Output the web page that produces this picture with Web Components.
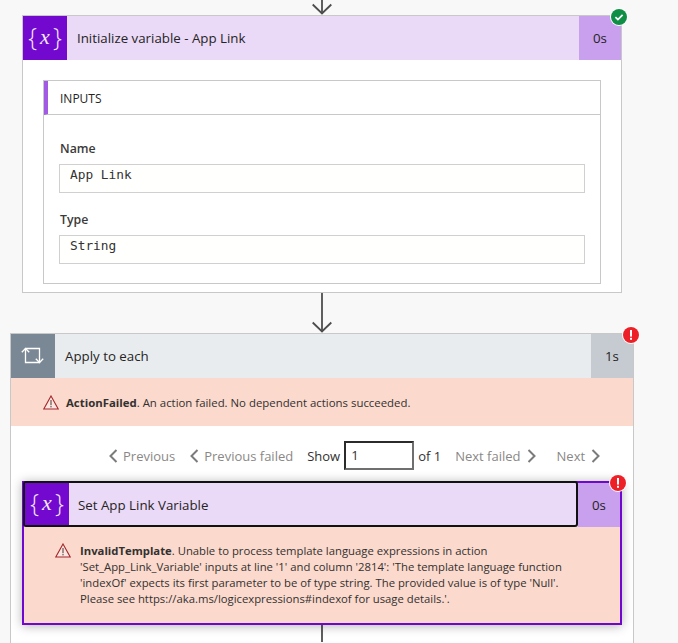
<!DOCTYPE html>
<html>
<head>
<meta charset="utf-8">
<title>Run details</title>
<style>
    html, body { margin: 0; height: 643px; overflow: hidden; background: #f8f8f8; }
    body { font-family: "Open Sans", "Noto Sans", sans-serif; color: #252423; }
</style>
</head>
<body>
<run-page>
    <flow-arrow height="15"></flow-arrow>
    <run-card status="ok" style="width: 600px">
        <run-header slot="head" icon="variable" label="Initialize variable - App Link" time="0s"></run-header>
        <inputs-panel>
            <field-box label="Name" value="App Link"></field-box>
            <field-box label="Type" value="String"></field-box>
        </inputs-panel>
    </run-card>
    <flow-arrow height="40"></flow-arrow>
    <run-card status="fail" style="width: 624px; height: 320px">
        <run-header slot="head" icon="loop" label="Apply to each" time="1s"></run-header>
        <error-banner size="outer"><b>ActionFailed</b>. An action failed. No dependent actions succeeded.</error-banner>
        <repeat-pager></repeat-pager>
        <failed-card>
            <run-header slot="head" icon="variable" label="Set App Link Variable" time="0s" focused></run-header>
            <error-banner size="inner"><b>InvalidTemplate</b>. Unable to process template language expressions in action<br>'Set_App_Link_Variable' inputs at line '1' and column '2814': 'The template language function<br>'indexOf' expects its first parameter to be of type string. The provided value is of type 'Null'.<br>Please see https://aka.ms/logicexpressions#indexof for usage details.'.</error-banner>
        </failed-card>
        <flow-arrow height="18" plain></flow-arrow>
    </run-card>
</run-page>

<script>
class RunPage extends HTMLElement {
    constructor() {
        super()
        this.shadow = this.attachShadow({ mode: 'open' });
    }
    connectedCallback() {
        this.shadow.innerHTML = `
        <style>
            :host { display: flex; flex-direction: column; align-items: center; width: 644px; }
        </style>
        <slot></slot>
        `;
    }
}

class FlowArrow extends HTMLElement {
    constructor() {
        super()
        this.shadow = this.attachShadow({ mode: 'open' });
    }
    connectedCallback() {
        const h = Number(this.getAttribute('height'));
        const head = this.hasAttribute('plain') ? '' : `<path d="M0.7 ${h - 10.5} L10 ${h - 1.5} L19.3 ${h - 10.5}" fill="none" stroke="#4d4d4d" stroke-width="1.8"/>`;
        this.shadow.innerHTML = `
        <style>
            :host { display: block; width: 20px; height: ${h}px; }
            svg { display: block; }
        </style>
        <svg width="20" height="${h}" viewBox="0 0 20 ${h}">
            <path d="M10 0 V${h - 1}" stroke="#4d4d4d" stroke-width="1.8"/>
            ${head}
        </svg>
        `;
    }
}

class RunCard extends HTMLElement {
    constructor() {
        super()
        this.shadow = this.attachShadow({ mode: 'open' });
    }
    connectedCallback() {
        const status = this.getAttribute('status');
        const badge = status == 'ok'
            ? `<svg class="badge" viewBox="0 0 18 18"><circle cx="9" cy="9" r="9" fill="#fff"/><circle cx="9" cy="9" r="8" fill="#0f8f46"/><path d="M5.4 9.2 L7.9 11.5 L12.6 6.8" fill="none" stroke="#fff" stroke-width="1.7"/></svg>`
            : `<svg class="badge" viewBox="0 0 18 18"><circle cx="9" cy="9" r="9" fill="#fff"/><circle cx="9" cy="9" r="8" fill="#ee2027"/><rect x="8" y="4" width="2" height="6.6" fill="#fff"/><rect x="8" y="11.8" width="2" height="2" fill="#fff"/></svg>`;
        this.shadow.innerHTML = `
        <style>
            :host { display: block; position: relative; box-sizing: border-box; border: 1px solid #c8c8c8; background: #fff; flex: none; }
            .badge { position: absolute; top: -8px; right: -7px; width: 18px; height: 18px; }
            :host([status="fail"]) { border-bottom: 0; }
            .stack { display: flex; flex-direction: column; align-items: center; }
            .stack ::slotted(*) { align-self: stretch; }
            .stack ::slotted(failed-card) { align-self: center; }
            .stack ::slotted(flow-arrow) { align-self: center; }
        </style>
        <slot name="head"></slot>
        <div class="stack"><slot></slot></div>
        ${badge}
        `;
    }
}

class RunHeader extends HTMLElement {
    constructor() {
        super()
        this.shadow = this.attachShadow({ mode: 'open' });
    }
    connectedCallback() {
        const icon = this.getAttribute('icon');
        const glyph = icon == 'variable'
            ? `<span class="brace">{</span><span class="ex">x</span><span class="brace">}</span>`
            : `<svg width="28" height="20" viewBox="0 0 28 20"><path d="M6.5 2.5 V16.5 H20.5 V2.5 H6.5" fill="none" stroke="#fff" stroke-width="1.3"/><path d="M2.8 6.3 L6.5 2.5 L10.2 6.3" fill="none" stroke="#fff" stroke-width="1.3"/><path d="M16.8 12.7 L20.5 16.5 L24.2 12.7" fill="none" stroke="#fff" stroke-width="1.3"/></svg>`;
        this.shadow.innerHTML = `
        <style>
            :host { display: flex; height: 44px; background: #e9ecef; font-size: 13.3px; color: #252423; position: relative; }
            :host([icon="variable"]) { background: #ead9f7; }
            .icon { width: 44px; height: 44px; flex: none; display: flex; align-items: center; justify-content: center; background: #7a8896; color: #fff; }
            :host([icon="variable"]) .icon { background: #7309cf; }
            .brace { font: 300 25px/44px "Open Sans", sans-serif; margin-top: -5px; opacity: 0.9; }
            .ex { font: italic 22px/44px "Liberation Serif", serif; margin: -3px 3px 0; opacity: 0.9; }
            .label { flex: 1; padding-left: 10px; line-height: 44px; white-space: nowrap; }
            .time { width: 42px; flex: none; text-align: center; line-height: 44px; background: #c5cbd1; }
            :host([icon="variable"]) .time { background: #c8a0ed; }
            .focus { display: contents; }
            :host([focused]) .focus { display: flex; flex: 1; box-sizing: border-box; border: 2px solid #111; border-radius: 3px; margin: -2px 0 0 -1px; height: 46px; }
            :host([focused]) .icon { height: 42px; width: 44px; }
            :host([focused]) .label { line-height: 44px; padding-left: 9px; }
        </style>
        <div class="focus">
            <div class="icon">${glyph}</div>
            <div class="label">${this.getAttribute('label')}</div>
        </div>
        <div class="time">${this.getAttribute('time')}</div>
        `;
    }
}

class InputsPanel extends HTMLElement {
    constructor() {
        super()
        this.shadow = this.attachShadow({ mode: 'open' });
    }
    connectedCallback() {
        this.shadow.innerHTML = `
        <style>
            :host { display: block; box-sizing: border-box; margin: 20px 20px 8px; border: 1px solid #c8c8c8; background: #fff; height: 204px; }
            .title { height: 34px; box-sizing: border-box; border-left: 4px solid #a259e4; border-bottom: 1px solid #c8c8c8; padding-left: 12px; line-height: 35px; font-size: 12px; }
            .fields { padding: 25px 15px 0; display: flex; flex-direction: column; gap: 18px; }
        </style>
        <div class="title">INPUTS</div>
        <div class="fields"><slot></slot></div>
        `;
    }
}

class FieldBox extends HTMLElement {
    constructor() {
        super()
        this.shadow = this.attachShadow({ mode: 'open' });
    }
    connectedCallback() {
        this.shadow.innerHTML = `
        <style>
            :host { display: block; font-size: 13px; }
            .name { line-height: 18px; font-weight: 600; color: #3b3a39; margin-bottom: 6px; font-size: 12.3px; padding-left: 1px; }
            .value { box-sizing: border-box; height: 29px; border: 1px solid #d0d0d0; background: #fffffd; padding: 1px 10px; font: 12.8px/18px "DejaVu Sans Mono", monospace; color: #333; white-space: pre; }
        </style>
        <div class="name">${this.getAttribute('label')}</div>
        <div class="value">${this.getAttribute('value')}</div>
        `;
    }
}

class ErrorBanner extends HTMLElement {
    constructor() {
        super()
        this.shadow = this.attachShadow({ mode: 'open' });
    }
    connectedCallback() {
        this.shadow.innerHTML = `
        <style>
            :host { display: flex; background: #fbd9cd; line-height: 16px; color: #323130; }
            :host([size="outer"]) { height: 48px; padding: 17px 0 0 32px; box-sizing: border-box; gap: 7px; font-size: 11.4px; }
            :host([size="inner"]) { padding: 16px 0 16px 31px; gap: 9px; font-size: 11.3px; }
            svg { flex: none; width: 16px; height: 15px; margin-top: 0; }
            ::slotted(b) { font-weight: 700; }
        </style>
        <svg viewBox="0 0 16 15"><path d="M8 1 L15.2 14 H0.8 Z" fill="#fde7e0" stroke="#a4262c" stroke-width="1.1"/><rect x="7.3" y="5" width="1.4" height="5.2" fill="#7a6a66"/><rect x="7.3" y="11" width="1.4" height="1.4" fill="#7a6a66"/></svg>
        <div><slot></slot></div>
        `;
    }
}

class RepeatPager extends HTMLElement {
    constructor() {
        super()
        this.shadow = this.attachShadow({ mode: 'open' });
    }
    connectedCallback() {
        const left = `<svg width="10" height="14" viewBox="0 0 10 14"><path d="M8.5 1 L2.5 7 L8.5 13" fill="none" stroke="#7b7b7b" stroke-width="2"/></svg>`;
        const right = `<svg width="10" height="14" viewBox="0 0 10 14"><path d="M1.5 1 L7.5 7 L1.5 13" fill="none" stroke="#7b7b7b" stroke-width="2"/></svg>`;
        this.shadow.innerHTML = `
        <style>
            :host { display: flex; align-items: center; height: 55px; box-sizing: border-box; padding: 4px 0 0 97px; font-size: 13px; color: #8a8886; white-space: nowrap; }
            .item { display: flex; align-items: center; gap: 5px; }
            .item.next { gap: 6px; }
            .show { color: #323130; }
            .box { box-sizing: border-box; width: 70px; height: 29px; border: 2px solid; border-color: #2b2b2b #6f6f6f #6f6f6f #2b2b2b; padding-left: 5px; line-height: 25px; color: #323130; margin: 0 4px; }
        </style>
        <div class="item" style="margin-right: 14px">${left}<span>Previous</span></div>
        <div class="item" style="margin-right: 14px">${left}<span>Previous failed</span></div>
        <span class="show">Show</span>
        <div class="box">1</div>
        <span class="show" style="margin-right: 14px">of 1</span>
        <div class="item next" style="margin-right: 20px"><span>Next failed</span>${right}</div>
        <div class="item next"><span>Next</span>${right}</div>
        `;
    }
}

class FailedCard extends HTMLElement {
    constructor() {
        super()
        this.shadow = this.attachShadow({ mode: 'open' });
    }
    connectedCallback() {
        this.shadow.innerHTML = `
        <style>
            :host { display: block; position: relative; box-sizing: border-box; width: 600px; border: 2px solid #7106d0; background: #fbd9cd; box-shadow: 0 1px 10px rgba(0, 0, 0, 0.3); flex: none; }
            .badge { position: absolute; top: -9px; right: -7px; width: 18px; height: 18px; }
        </style>
        <slot name="head"></slot>
        <slot></slot>
        <svg class="badge" viewBox="0 0 18 18"><circle cx="9" cy="9" r="9" fill="#fff"/><circle cx="9" cy="9" r="8" fill="#ee2027"/><rect x="8" y="4" width="2" height="6.6" fill="#fff"/><rect x="8" y="11.8" width="2" height="2" fill="#fff"/></svg>
        `;
    }
}

customElements.define('run-page', RunPage);
customElements.define('flow-arrow', FlowArrow);
customElements.define('run-card', RunCard);
customElements.define('run-header', RunHeader);
customElements.define('inputs-panel', InputsPanel);
customElements.define('field-box', FieldBox);
customElements.define('error-banner', ErrorBanner);
customElements.define('repeat-pager', RepeatPager);
customElements.define('failed-card', FailedCard);
</script>
</body>
</html>
